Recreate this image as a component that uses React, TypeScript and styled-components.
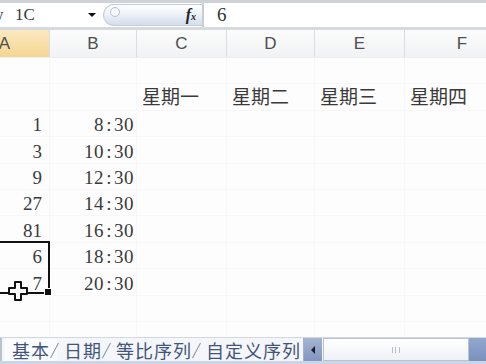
import React from 'react';
import styled, { createGlobalStyle } from 'styled-components';

const Global = createGlobalStyle`
  html, body { margin: 0; padding: 0; background: #fff; }
  body { width: 486px; height: 364px; overflow: hidden; }
`;

const Page = styled.div`
  position: relative;
  width: 486px;
  height: 364px;
  display: flex;
  flex-direction: column;
  overflow: hidden;
  background: #fefdfd;
  font-family: "Liberation Serif", serif;
  color: #353535;
`;

/* ---------- formula bar ---------- */
const FormulaBar = styled.div`
  flex: none;
  height: 24px;
  border-top: 3px solid #cfd2d7;
  border-bottom: 3px solid #d6d9de;
  display: flex;
  align-items: center;
  background: #fff;
`;

const NameBox = styled.div`
  width: 103px;
  height: 100%;
  display: flex;
  align-items: center;
  font-size: 17px;
  color: #3a3a3a;
`;

const ClippedChar = styled.span`
  margin-left: -5px;
  width: 20px;
`;

const NameText = styled.span`
  flex: 1;
`;

const DropArrow = styled.span`
  width: 0;
  height: 0;
  border-left: 4px solid transparent;
  border-right: 4px solid transparent;
  border-top: 4px solid #111;
  margin-right: 7px;
`;

const FxPill = styled.div`
  width: 99px;
  height: 22px;
  border-radius: 12px 0 0 12px;
  border: 1px solid #c3ccd8;
  border-right: none;
  background: linear-gradient(#ffffff 0%, #eef2f8 45%, #d3dded 100%);
  display: flex;
  align-items: center;
  justify-content: space-between;
  padding: 0 6px 0 6px;
  box-sizing: border-box;
`;

const RoundKnob = styled.span`
  width: 8px;
  height: 8px;
  border-radius: 50%;
  border: 1px solid #b7c0cc;
  background: #f7f9fc;
  margin-top: -6px;
`;

const Fx = styled.span`
  font-family: "Liberation Serif", serif;
  font-style: italic;
  font-weight: bold;
  font-size: 16px;
  color: #222;
  sub {
    font-size: 10px;
    vertical-align: baseline;
  }
`;

const FormulaDivider = styled.span`
  width: 2px;
  height: 100%;
  background: #c9cdd3;
`;

const FormulaValue = styled.span`
  margin-left: 13px;
  font-size: 19px;
  color: #333;
`;

/* ---------- sheet ---------- */
const Sheet = styled.div`
  flex: 1;
  display: flex;
  flex-direction: column;
  overflow: hidden;
  margin-left: -40px;
  width: 560px;
`;

const COLS = '90px 87px 90px 88px 90px 115px';

const HeaderRow = styled.div`
  flex: none;
  height: 27px;
  display: grid;
  grid-template-columns: ${COLS};
  background: linear-gradient(#fcfcfc, #f1f2f4);
  border-bottom: 1px solid #eceef1;
`;

const HeaderCell = styled.div<{ $selected?: boolean }>`
  display: flex;
  align-items: center;
  justify-content: center;
  font-family: "Liberation Sans", sans-serif;
  font-size: 17px;
  color: #4e4e4e;
  border-right: 1px solid #d9dce0;
  background: ${(p) =>
    p.$selected ? 'linear-gradient(#fbe9c0, #f6d592)' : 'transparent'};
`;

const Body = styled.div`
  position: relative;
  flex: 1;
  display: grid;
  grid-template-columns: ${COLS};
  grid-auto-rows: 26.4px;
  align-content: start;
`;

const Cell = styled.div<{ $kind?: 'num' | 'time' | 'day' }>`
  display: flex;
  align-items: flex-end;
  justify-content: ${(p) => (p.$kind === 'day' ? 'flex-start' : 'flex-end')};
  padding: ${(p) =>
    p.$kind === 'num'
      ? '0 7px 0 0'
      : p.$kind === 'time'
      ? '0 2px 0 0'
      : p.$kind === 'day'
      ? '0 0 3px 5px'
      : '0'};
  font-family: ${(p) =>
    p.$kind === 'day'
      ? '"Noto Sans CJK SC", sans-serif'
      : '"Liberation Serif", serif'};
  font-size: 19px;
  line-height: 22px;
  color: #3a3a3a;
  border-right: 1px solid #f7f7f8;
  border-bottom: 1px solid #f7f7f8;
  white-space: nowrap;
`;

const Colon = styled.span`
  display: inline-block;
  width: 10px;
  text-align: center;
`;

const Digits = styled.span`
  letter-spacing: 0.5px;
`;

const Selection = styled.div`
  position: absolute;
  left: 0;
  top: 183px;
  width: 90px;
  height: 53px;
  border: 2px solid #111;
  box-sizing: border-box;
  pointer-events: none;
`;

const FillHandle = styled.span`
  position: absolute;
  right: -4px;
  bottom: -4px;
  width: 6px;
  height: 6px;
  background: #111;
  border: 1px solid #fff;
`;

const Cursor = styled.svg`
  position: absolute;
  left: 7px;
  top: 280px;
`;

/* ---------- tab bar ---------- */
const TabBar = styled.div`
  flex: none;
  height: 23px;
  display: flex;
  background: #f4f6f9;
  border-top: 1px solid #d3d8e0;
  border-bottom: 3px solid #cbd5e6;
`;

const TabStrip = styled.div`
  flex: none;
  width: 303px;
  display: flex;
  align-items: center;
  padding-left: 3px;
  box-sizing: border-box;
  border-left: 2px solid #b9c1cd;
  overflow: hidden;
`;

const Tab = styled.span<{ $first?: boolean; $active?: boolean }>`
  flex: none;
  position: relative;
  padding: 0 7px;
  font-family: "Noto Sans CJK SC", sans-serif;
  font-size: 18px;
  letter-spacing: 1px;
  line-height: 22px;
  white-space: nowrap;
  color: #43547c;
  background: ${(p) => (p.$active ? '#fbfcfe' : 'transparent')};
  &::before {
    content: '';
    display: ${(p) => (p.$first ? 'none' : 'block')};
    position: absolute;
    left: -3px;
    top: 3px;
    width: 1px;
    height: 17px;
    background: #8692a8;
    transform: rotate(28deg);
  }
`;

const ScrollArea = styled.div`
  flex: 1;
  display: flex;
  border-left: 1px solid #a7b0be;
`;

const ScrollBtn = styled.div`
  width: 18px;
  display: flex;
  align-items: center;
  justify-content: center;
  background: linear-gradient(#a5b4d2, #8196c0);
`;

const LeftTri = styled.span`
  width: 0;
  height: 0;
  border-top: 4px solid transparent;
  border-bottom: 4px solid transparent;
  border-right: 4px solid #1b1f2a;
`;

const Thumb = styled.div`
  width: 146px;
  margin-left: 1px;
  display: flex;
  align-items: center;
  justify-content: center;
  background: linear-gradient(#ffffff, #eef1f6);
  border: 1px solid #b9c3d4;
  box-sizing: border-box;
`;

const Grip = styled.span`
  width: 6px;
  height: 6px;
  border-left: 1px solid #b6bdc9;
  border-right: 1px solid #b6bdc9;
  position: relative;
  &::after {
    content: '';
    position: absolute;
    left: 2px;
    top: 0;
    width: 1px;
    height: 6px;
    background: #b6bdc9;
  }
`;

const TrackEnd = styled.div`
  flex: 1;
  background: linear-gradient(#93a8cf, #7a91bd);
`;

type Row = { a?: string; b?: string; days?: string[] };

const rows: Row[] = [
  {},
  { days: ['星期一', '星期二', '星期三', '星期四'] },
  { a: '1', b: '8:30' },
  { a: '3', b: '10:30' },
  { a: '9', b: '12:30' },
  { a: '27', b: '14:30' },
  { a: '81', b: '16:30' },
  { a: '6', b: '18:30' },
  { a: '7', b: '20:30' },
  {},
  {},
];

const Time = ({ value }: { value: string }) => {
  const [h, m] = value.split(':');
  return (
    <span>
      <Digits>{h}</Digits>
      <Colon>:</Colon>
      <Digits>{m}</Digits>
    </span>
  );
};

export default function App() {
  return (
    <>
      <Global />
      <Page>
        <FormulaBar>
          <NameBox>
            <ClippedChar>y</ClippedChar>
            <NameText>1C</NameText>
            <DropArrow />
          </NameBox>
          <FxPill>
            <RoundKnob />
            <Fx>
              f<sub>x</sub>
            </Fx>
          </FxPill>
          <FormulaDivider />
          <FormulaValue>6</FormulaValue>
        </FormulaBar>

        <Sheet>
          <HeaderRow>
            {['A', 'B', 'C', 'D', 'E', 'F'].map((c) => (
              <HeaderCell key={c} $selected={c === 'A'}>
                {c}
              </HeaderCell>
            ))}
          </HeaderRow>
          <Body>
            {rows.map((r, i) => (
              <React.Fragment key={i}>
                <Cell $kind="num">{r.a}</Cell>
                <Cell $kind="time">{r.b ? <Time value={r.b} /> : null}</Cell>
                {[0, 1, 2, 3].map((d) => (
                  <Cell key={d} $kind="day">
                    {r.days ? r.days[d] : null}
                  </Cell>
                ))}
              </React.Fragment>
            ))}
            <Selection>
              <FillHandle />
            </Selection>
          </Body>
        </Sheet>

        <TabBar>
          <TabStrip>
            <Tab $first $active>基本</Tab>
            <Tab>日期</Tab>
            <Tab>等比序列</Tab>
            <Tab>自定义序列</Tab>
          </TabStrip>
          <ScrollArea>
            <ScrollBtn>
              <LeftTri />
            </ScrollBtn>
            <Thumb>
              <Grip />
            </Thumb>
            <TrackEnd />
          </ScrollArea>
        </TabBar>

        <Cursor width="22" height="22" viewBox="0 0 22 22">
          <path
            d="M8 2 H14 V8 H20 V14 H14 V20 H8 V14 H2 V8 H8 Z"
            fill="#fff"
            stroke="#111"
            strokeWidth="2"
            strokeLinejoin="round"
          />
        </Cursor>
      </Page>
    </>
  );
}
